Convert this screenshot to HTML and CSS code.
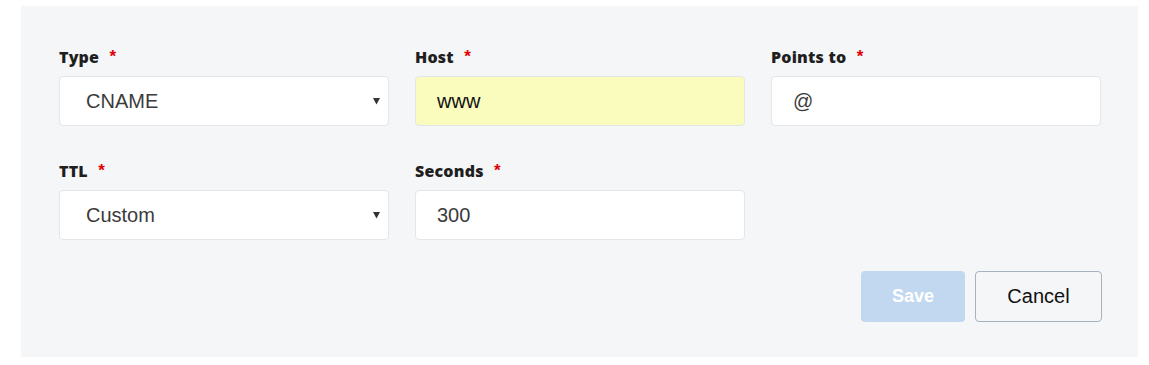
FILE: index.html
```html
<!DOCTYPE html>
<html lang="en">
<head>
<meta charset="utf-8">
<title>DNS record</title>
<link rel="stylesheet" href="styles.css">
</head>
<body>
<form class="panel">
  <div class="grid">
    <div class="field">
      <label class="label">Type <span class="req">*</span></label>
      <div class="select-wrap">
        <select class="control select"><option>CNAME</option></select>
        <svg class="arrow" width="7" height="7" viewBox="0 0 7 7"><path d="M0 0H7L3.5 6.5Z" fill="#333"/></svg>
      </div>
    </div>
    <div class="field">
      <label class="label">Host <span class="req">*</span></label>
      <input class="control input filled" value="www">
    </div>
    <div class="field">
      <label class="label">Points to <span class="req">*</span></label>
      <input class="control input" value="@">
    </div>
    <div class="field">
      <label class="label">TTL <span class="req">*</span></label>
      <div class="select-wrap">
        <select class="control select"><option>Custom</option></select>
        <svg class="arrow" width="7" height="7" viewBox="0 0 7 7"><path d="M0 0H7L3.5 6.5Z" fill="#333"/></svg>
      </div>
    </div>
    <div class="field">
      <label class="label">Seconds <span class="req">*</span></label>
      <input class="control input" value="300">
    </div>
  </div>
  <div class="actions">
    <button type="button" class="btn btn-save" disabled>Save</button>
    <button type="button" class="btn btn-cancel">Cancel</button>
  </div>
</form>
</body>
</html>
```
FILE: styles.css
```css
html, body {
  margin: 0;
  padding: 0;
  background: #ffffff;
}
body {
  font-family: "Liberation Sans", Arial, sans-serif;
}
.panel {
  margin: 6px 11px 0 21px;
  padding: 41px 36px 36px 38px;
  background: #f5f6f8;
  height: 351px;
  box-sizing: border-box;
}
.grid {
  display: grid;
  grid-template-columns: 330px 330px 330px;
  column-gap: 26px;
  row-gap: 35px;
}
.field {
  display: flex;
  flex-direction: column;
  gap: 9px;
}
.label {
  display: block;
  height: 20px;
  font-family: "Open Sans", sans-serif;
  font-weight: 800;
  font-size: 16px;
  line-height: 20px;
  color: #1f1f1f;
  letter-spacing: 0.2px;
  white-space: nowrap;
}
.req {
  color: #e00000;
  font-family: "Liberation Sans", Arial, sans-serif;
  font-weight: 700;
  font-size: 17px;
  line-height: 1;
  margin-left: 6px;
  vertical-align: 1px;
}
.control {
  box-sizing: border-box;
  width: 330px;
  height: 50px;
  margin: 0;
  border: 1px solid #e3e5e8;
  border-radius: 4px;
  background: #ffffff;
  font-family: "Liberation Sans", Arial, sans-serif;
  font-size: 20px;
  color: #3b3b3b;
  outline: none;
}
.input {
  padding: 0 21px;
}
.filled {
  background: #f9fcbd;
  color: #111111;
}
.select-wrap {
  position: relative;
}
.select {
  appearance: none;
  -webkit-appearance: none;
  padding: 0 26px;
}
.arrow {
  position: absolute;
  right: 9px;
  top: 22px;
}
.actions {
  display: flex;
  justify-content: flex-end;
  gap: 10px;
  margin-top: 31px;
}
.btn {
  box-sizing: border-box;
  height: 51px;
  border-radius: 4px;
  font-family: "Liberation Sans", Arial, sans-serif;
  margin: 0;
}
.btn-save {
  width: 104px;
  background: #c2d8f0;
  border: none;
  color: #ffffff;
  font-weight: 700;
  font-size: 18px;
}
.btn-cancel {
  width: 127px;
  background: #f5f6f8;
  border: 1px solid #a8b3bf;
  color: #111111;
  font-size: 20px;
}
```
